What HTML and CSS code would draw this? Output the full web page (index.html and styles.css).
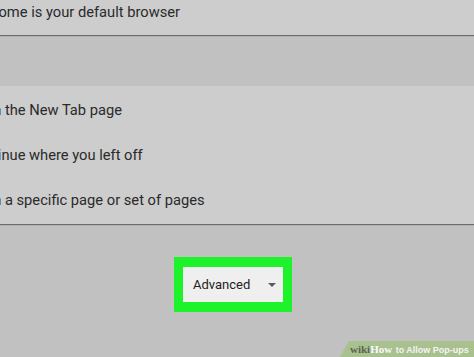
FILE: index.html
```html
<!DOCTYPE html>
<html lang="en">
<head>
  <meta charset="UTF-8" />
  <title>How to Allow Pop-ups</title>
  <link rel="stylesheet" href="styles.css">
</head>
<body>
  <div class="card top">
    <div class="row default">Google Chrome is your default browser</div>
  </div>

  <div class="card startup">
    <div class="row option">Open the New Tab page</div>
    <div class="row option">Continue where you left off</div>
    <div class="row option">Open a specific page or set of pages</div>
  </div>

  <div class="advancedWrap">
    <div class="highlight">
      <div class="advancedBtn">
        <span>Advanced</span>
        <span class="arrow"></span>
      </div>
    </div>
  </div>

  <div class="watermark">
    <span class="wiki">wiki</span><span class="how">How</span> to Allow Pop-ups
  </div>
</body>
</html>
```

FILE: styles.css
```css
html, body {
  margin: 0;
  padding: 0;
}
body {
  width: 474px;
  height: 357px;
  overflow: hidden;
  position: relative;
  background: #c1c1c1;
  font-family: Roboto, "Liberation Sans", sans-serif;
  font-size: 14.7px;
  color: #2a2a2a;
}
.card {
  background: #cdcdcd;
  box-shadow: 0 1px 1px rgba(0, 0, 0, 0.45);
}
.row {
  white-space: nowrap;
  line-height: 20px;
}
.top {
  height: 35px;
}
.default {
  padding-top: 2px;
  margin-left: -74px;
}
.startup {
  margin-top: 51px;
  padding: 2px 0 1px;
}
.option {
  height: 45px;
  line-height: 45px;
  margin-left: -33px;
}
.advancedWrap {
  display: flex;
  padding-left: 174px;
  margin-top: 33px;
}
.highlight {
  background: #1ef22a;
  padding: 10px 9px;
}
.advancedBtn {
  width: 100px;
  height: 35px;
  box-sizing: border-box;
  background: #efefef;
  display: flex;
  align-items: center;
  justify-content: space-between;
  padding: 0 7px 0 10px;
  font-size: 13px;
  color: #222;
}
.arrow {
  width: 0;
  height: 0;
  border-left: 4px solid transparent;
  border-right: 4px solid transparent;
  border-top: 4px solid #5a5a5a;
}
.watermark {
  position: absolute;
  right: 0;
  bottom: 0;
  width: 124px;
  height: 16px;
  padding-left: 10px;
  background: #a9c08f;
  clip-path: polygon(9px 0, 100% 0, 100% 100%, 0 100%);
  color: #f4f4f4;
  font-family: "Liberation Sans", sans-serif;
  font-size: 9px;
  font-weight: bold;
  line-height: 16px;
  white-space: nowrap;
}
.wiki {
  font-family: "Liberation Serif", serif;
  font-size: 11px;
  color: #5c6352;
}
.how {
  font-family: "Liberation Serif", serif;
  font-size: 11px;
  color: #fafafa;
  margin-right: 1px;
}
```
